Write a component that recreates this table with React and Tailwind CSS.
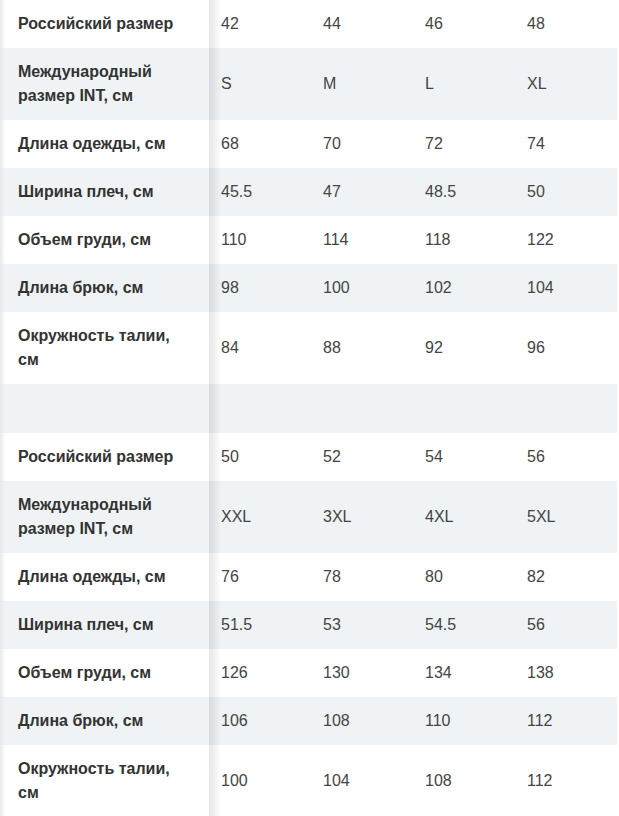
const groups = [
  [
    ["Российский размер", ["42", "44", "46", "48"]],
    ["Международный размер INT, см", ["S", "M", "L", "XL"]],
    ["Длина одежды, см", ["68", "70", "72", "74"]],
    ["Ширина плеч, см", ["45.5", "47", "48.5", "50"]],
    ["Объем груди, см", ["110", "114", "118", "122"]],
    ["Длина брюк, см", ["98", "100", "102", "104"]],
    ["Окружность талии, см", ["84", "88", "92", "96"]],
    ["", ["", "", "", ""]],
  ],
  [
    ["Российский размер", ["50", "52", "54", "56"]],
    ["Международный размер INT, см", ["XXL", "3XL", "4XL", "5XL"]],
    ["Длина одежды, см", ["76", "78", "80", "82"]],
    ["Ширина плеч, см", ["51.5", "53", "54.5", "56"]],
    ["Объем груди, см", ["126", "130", "134", "138"]],
    ["Длина брюк, см", ["106", "108", "110", "112"]],
    ["Окружность талии, см", ["100", "104", "108", "112"]],
  ],
];

const rows = groups.flat();

export default function App() {
  return (
    <div
      className="w-[617px] bg-white text-[16px] leading-6"
      style={{ fontFamily: '"Liberation Sans", Arial, sans-serif' }}
    >
      {rows.map(([label, values], i) => (
        <div
          key={i}
          className={`flex ${i % 2 === 1 ? "bg-[#eff3f5]" : "bg-white"}`}
        >
          <div
            className={`relative z-10 w-[209px] shrink-0 py-3 pl-[18px] pr-6 font-bold text-[#333] ${
              label ? "min-h-12" : "min-h-[49px]"
            } ${
              i % 2 === 1 ? "bg-[#eff3f5]" : "bg-white"
            } before:absolute before:inset-y-0 before:left-0 before:w-[5px] before:bg-gradient-to-r before:from-[#e6e9ea] before:to-transparent after:absolute after:inset-y-0 after:left-full after:w-3 after:bg-gradient-to-r after:from-black/10 after:to-transparent`}
          >
            {label}
          </div>
          {values.map((v, j) => (
            <div
              key={j}
              className="flex w-[102px] items-center px-3 text-[#444]"
            >
              {v}
            </div>
          ))}
        </div>
      ))}
    </div>
  );
}
